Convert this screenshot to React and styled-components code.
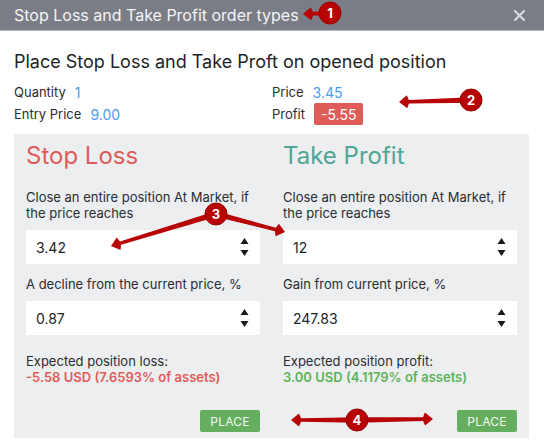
import React from "react";
import styled, { createGlobalStyle } from "styled-components";

const GlobalStyle = createGlobalStyle`
  html, body {
    margin: 0;
    padding: 0;
    background: #ffffff;
  }
  body {
    font-family: Inter, "Noto Sans", "Liberation Sans", sans-serif;
    color: #26282e;
  }
`;

const Dialog = styled.div`
  position: relative;
  width: 544px;
  height: 444px;
  background: #ffffff;
  overflow: hidden;
`;

const Header = styled.div`
  height: 30px;
  padding: 0 19px 0 14px;
  display: flex;
  align-items: center;
  justify-content: space-between;
  background: #7a7d86;
  border-bottom: 1px solid #b7b9be;
`;

const Title = styled.div`
  font-size: 16px;
  color: #f4f4f5;
  line-height: 20px;
`;

const CloseIcon = styled.svg`
  width: 11px;
  height: 11px;
`;

const Body = styled.div`
  padding: 20px 15px 0 14px;
`;

const Heading = styled.h1`
  margin: 0;
  font-size: 18px;
  line-height: 22px;
  font-weight: 400;
  color: #1d1f26;
`;

const Info = styled.div`
  margin-top: 9px;
  display: grid;
  grid-template-columns: 258px 1fr;
  row-gap: 1px;
  font-size: 13px;
`;

const InfoItem = styled.div`
  display: flex;
  align-items: center;
  gap: 9px;
  height: ${(p) => (p.$tall ? "22px" : "20px")};
  color: #2a2c32;
`;

const Value = styled.span`
  color: #4d9bf0;
  font-size: 14px;
`;

const Badge = styled.span`
  display: inline-flex;
  align-items: center;
  justify-content: center;
  height: 22px;
  padding: 0 7px;
  background: #e05c58;
  color: #ffffff;
  font-size: 14px;
  border-radius: 2px;
`;

const Panel = styled.div`
  margin-top: 9px;
  background: #eceef0;
  padding: 7px 12px 6px;
  display: grid;
  grid-template-columns: 234px 234px;
  column-gap: 23px;
`;

const Column = styled.div`
  display: flex;
  flex-direction: column;
`;

const ColumnTitle = styled.h2`
  margin: 0;
  font-size: 24px;
  line-height: 29px;
  font-weight: 400;
  color: ${(p) => p.$color};
`;

const Label = styled.div`
  font-size: 13px;
  line-height: 16px;
  color: #2a2c32;
  margin-top: ${(p) => p.$gap}px;
`;

const InputBox = styled.div`
  margin-top: 9px;
  height: 34px;
  background: #ffffff;
  display: flex;
  align-items: center;
  padding: 0 11px 0 10px;
`;

const InputValue = styled.span`
  flex: 1;
  font-size: 14px;
  color: #222429;
`;

const Spinner = styled.svg`
  width: 9px;
  height: 20px;
`;

const Result = styled.div`
  font-size: 13px;
  line-height: 16px;
  font-weight: 600;
  color: ${(p) => p.$color};
`;

const Actions = styled.div`
  margin-top: 25px;
  display: flex;
  justify-content: flex-end;
`;

const PlaceButton = styled.button`
  width: 60px;
  height: 22px;
  border: none;
  border-radius: 2px;
  background: #66ae5f;
  color: #f3f8f2;
  font-family: inherit;
  font-size: 12px;
  padding: 0;
  letter-spacing: 0.2px;
`;

const Overlay = styled.svg`
  position: absolute;
  left: 0;
  top: 0;
  pointer-events: none;
`;

const NumberInput = ({ value }) => (
  <InputBox>
    <InputValue>{value}</InputValue>
    <Spinner viewBox="0 0 9 20">
      <path d="M4.5 1 L8.5 7 L0.5 7 Z" fill="#1b1b1b" />
      <path d="M0.5 13 L8.5 13 L4.5 19 Z" fill="#1b1b1b" />
    </Spinner>
  </InputBox>
);

const OrderColumn = ({ title, color, label1, value1, label2, value2, resultLabel, result, resultColor }) => (
  <Column>
    <ColumnTitle $color={color}>{title}</ColumnTitle>
    <Label $gap={19}>{label1}</Label>
    <NumberInput value={value1} />
    <Label $gap={12}>{label2}</Label>
    <NumberInput value={value2} />
    <Label $gap={18}>{resultLabel}</Label>
    <Result $color={resultColor}>{result}</Result>
    <Actions>
      <PlaceButton>PLACE</PlaceButton>
    </Actions>
  </Column>
);

// annotation arrows drawn over the screenshot
const arrowPoints = ([x1, y1], [x2, y2]) => {
  const dx = x2 - x1;
  const dy = y2 - y1;
  const len = Math.hypot(dx, dy);
  const ux = dx / len;
  const uy = dy / len;
  const nx = -uy;
  const ny = ux;
  const head = 10;
  const hw = 6.5;
  const w1 = 2.8;
  const w2 = 1.8;
  const bx = x2 - ux * head;
  const by = y2 - uy * head;
  const pts = [
    [x1 + nx * w1, y1 + ny * w1],
    [bx + nx * w2, by + ny * w2],
    [bx + ux * 2 + nx * hw, by + uy * 2 + ny * hw],
    [x2, y2],
    [bx + ux * 2 - nx * hw, by + uy * 2 - ny * hw],
    [bx - nx * w2, by - ny * w2],
    [x1 - nx * w1, y1 - ny * w1],
  ];
  return pts.map((p) => p.map((v) => v.toFixed(1)).join(",")).join(" ");
};

const arrows = [
  { from: [330, 13], to: [303, 14] },
  { from: [471, 100], to: [399, 102] },
  { from: [216, 214], to: [111, 246] },
  { from: [216, 214], to: [285, 232] },
  { from: [357, 420], to: [291, 420] },
  { from: [357, 420], to: [433, 419] },
];

const markers = [
  { x: 330, y: 13, n: 1 },
  { x: 471, y: 100, n: 2 },
  { x: 216, y: 214, n: 3 },
  { x: 357, y: 420, n: 4 },
];

const Annotations = () => (
  <Overlay width="544" height="444" viewBox="0 0 544 444">
    {arrows.map((a, i) => (
      <polygon key={i} points={arrowPoints(a.from, a.to)} fill="#b70404" />
    ))}
    {markers.map((m) => (
      <g key={m.n}>
        <circle cx={m.x} cy={m.y} r="11" fill="#b70404" stroke="#9a0000" strokeWidth="1" />
        <text
          x={m.x}
          y={m.y + 4.5}
          textAnchor="middle"
          fontFamily="Inter, 'Liberation Sans', sans-serif"
          fontWeight="700"
          fontSize="13"
          fill="#ffffff"
        >
          {m.n}
        </text>
      </g>
    ))}
  </Overlay>
);

export default function App() {
  return (
    <>
      <GlobalStyle />
      <Dialog>
        <Header>
          <Title>Stop Loss and Take Profit order types</Title>
          <CloseIcon viewBox="0 0 11 11">
            <path d="M1 1 L10 10 M10 1 L1 10" stroke="#dcdde0" strokeWidth="2" strokeLinecap="round" />
          </CloseIcon>
        </Header>
        <Body>
          <Heading>Place Stop Loss and Take Proft on opened position</Heading>
          <Info>
            <InfoItem>
              Quantity <Value>1</Value>
            </InfoItem>
            <InfoItem>
              Price <Value>3.45</Value>
            </InfoItem>
            <InfoItem $tall>
              Entry Price <Value>9.00</Value>
            </InfoItem>
            <InfoItem $tall>
              Profit <Badge>-5.55</Badge>
            </InfoItem>
          </Info>
          <Panel>
            <OrderColumn
              title="Stop Loss"
              color="#e05c58"
              label1="Close an entire position At Market, if the price reaches"
              value1="3.42"
              label2="A decline from the current price, %"
              value2="0.87"
              resultLabel="Expected position loss:"
              result="-5.58 USD (7.6593% of assets)"
              resultColor="#e05c58"
            />
            <OrderColumn
              title="Take Profit"
              color="#4fa596"
              label1="Close an entire position At Market, if the price reaches"
              value1="12"
              label2="Gain from current price, %"
              value2="247.83"
              resultLabel="Expected position profit:"
              result="3.00 USD (4.1179% of assets)"
              resultColor="#5cb35a"
            />
          </Panel>
        </Body>
        <Annotations />
      </Dialog>
    </>
  );
}
